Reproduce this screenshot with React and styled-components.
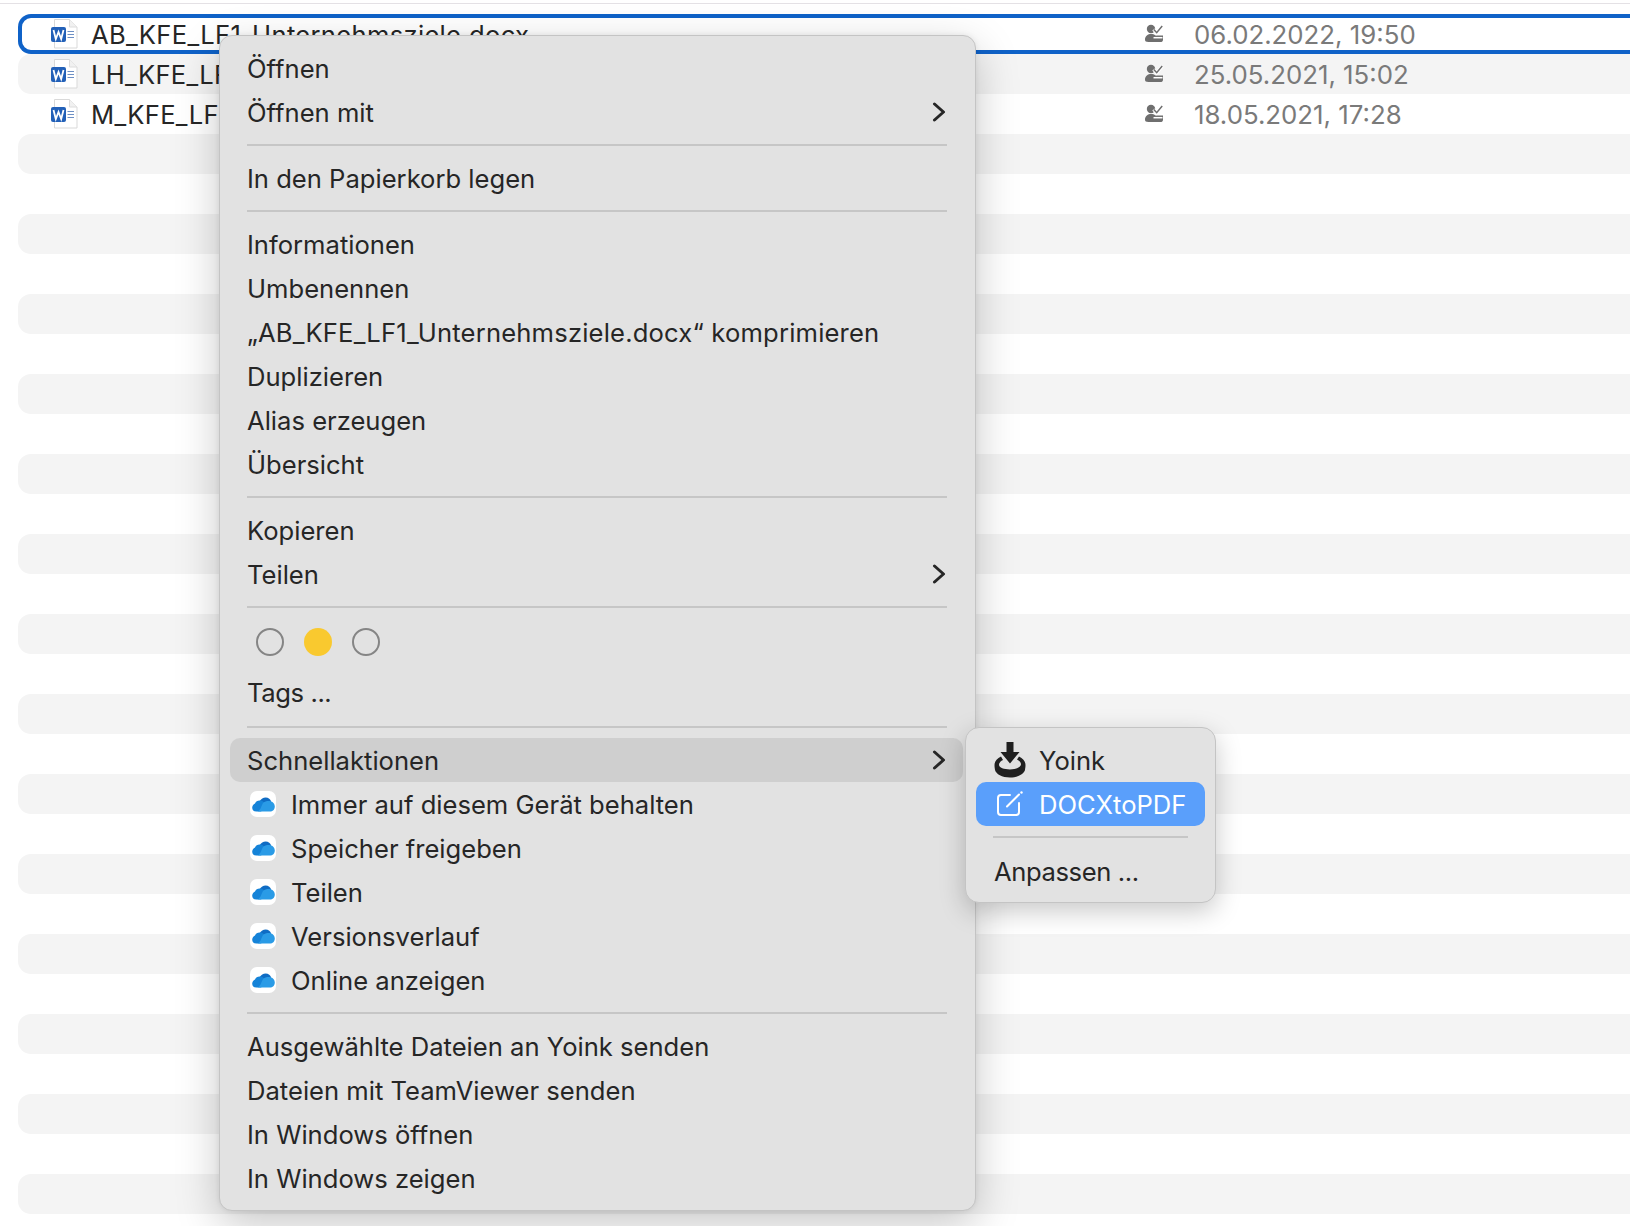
import React from "react";
import styled, { createGlobalStyle } from "styled-components";

const GlobalStyle = createGlobalStyle`
  html, body {
    margin: 0;
    padding: 0;
    height: 100%;
    background: #fff;
    overflow: hidden;
  }
  body {
    font-family: Inter, "Noto Sans", "Liberation Sans", sans-serif;
    color: #262626;
  }
`;

const Page = styled.div`
  position: relative;
  width: 1630px;
  height: 1226px;
  overflow: hidden;
  background: #fff;
`;

const TopLine = styled.div`
  height: 1px;
  margin-top: 3px;
  margin-bottom: 10px;
  background: #e4e1e5;
`;

const FileList = styled.div`
  display: flex;
  flex-direction: column;
  margin-left: 18px;
  margin-right: -30px;
`;

const Row = styled.div`
  box-sizing: border-box;
  height: 40px;
  display: flex;
  align-items: center;
  padding-left: 33px;
  border-radius: 13px 0 0 13px;
  background: ${(p) => (p.$odd ? "#f4f4f4" : "#fff")};
  ${(p) => p.$selected && "box-shadow: inset 0 0 0 4px #0f62c8;"}
`;

const FileName = styled.span`
  width: 1053px;
  margin: 1px 0 0 10px;
  font-size: 25.6px;
  white-space: nowrap;
  letter-spacing: 0.3px;
`;

const DateText = styled.span`
  margin: 1px 0 0 30px;
  font-size: 25.8px;
  color: #7a7a7a;
`;

const Menu = styled.div`
  position: absolute;
  box-sizing: border-box;
  left: 219px;
  top: 35px;
  width: 757px;
  height: 1176px;
  padding: 11px 12px 0 10px;
  background: #e2e2e2;
  border: 1px solid #c4c4c4;
  border-radius: 13px;
  box-shadow: 0 14px 44px rgba(0, 0, 0, 0.22), 0 0 6px rgba(0, 0, 0, 0.08);
`;

const Item = styled.div`
  box-sizing: border-box;
  height: 44px;
  display: flex;
  align-items: center;
  padding: 0 17px;
  border-radius: 10px;
  font-size: 25.6px;
  white-space: nowrap;
  letter-spacing: ${(p) => p.$spacing || 0};
  background: ${(p) => (p.$active ? "#cfcfcf" : "transparent")};
`;

/* text in the upper half of the menu sits a pixel higher than the lower half */
const UpperSection = styled.div`
  ${Item} {
    padding-bottom: 2px;
  }
`;

const Label = styled.span`
  flex: 1;
`;

const Separator = styled.div`
  height: 2px;
  margin: ${(p) => p.$top || "9px"} 16px ${(p) => p.$bottom || "11px"} 17px;
  background: #c6c6c6;
`;

const TagRow = styled.div`
  display: flex;
  gap: 20px;
  padding: 9px 0 15px 26px;
`;

const TagDot = styled.span`
  box-sizing: border-box;
  width: 28px;
  height: 28px;
  border-radius: 50%;
  border: ${(p) => (p.$color ? "none" : "2px solid #858585")};
  background: ${(p) => p.$color || "transparent"};
`;

const CloudBadge = styled.span`
  width: 26px;
  height: 26px;
  margin: 0 15px 0 3px;
  display: flex;
  align-items: center;
  justify-content: center;
  flex: none;
  background: #fff;
  border-radius: 7px;
`;

const SubMenu = styled.div`
  position: absolute;
  box-sizing: border-box;
  left: 965px;
  top: 727px;
  width: 251px;
  height: 176px;
  padding: 10px 10px 0;
  background: #e2e2e2;
  border: 1px solid #c4c4c4;
  border-radius: 14px;
  box-shadow: 0 8px 26px rgba(0, 0, 0, 0.22);
`;

const SubItem = styled.div`
  height: 44px;
  display: flex;
  align-items: center;
  padding: 0 18px;
  border-radius: 10px;
  font-size: 25.6px;
  white-space: nowrap;
  letter-spacing: ${(p) => p.$spacing || 0};
  color: ${(p) => (p.$active ? "#fff" : "#262626")};
  background: ${(p) => (p.$active ? "#5a9ffb" : "transparent")};
`;

const SubIcon = styled.span`
  width: 45px;
  display: flex;
  align-items: center;
  flex: none;
`;

const SubSeparator = styled.div`
  height: 2px;
  margin: 10px 17px 11px;
  background: #c6c6c6;
`;

const WordIcon = () => (
  <svg width="30" height="32" viewBox="0 0 30 32">
    <path d="M3.500 1.500h15l7.500 7.500v21h-22.500z" fill="#fff" stroke="#d9d9d9" strokeWidth="1" />
    <path d="M18.500 1.500v7.500h7.500" fill="#f1f1f1" stroke="#dcdcdc" strokeWidth="1" />
    <rect x="0" y="9" width="15" height="15" rx="2" fill="#2260b8" />
    <path d="M2.500 12l2.300 9 2.700-7 2.700 7 2.300-9" fill="none" stroke="#fff" strokeWidth="1.800" />
    <path d="M16.500 13.500h6.500M16.500 16.500h6.500M16.500 19.500h6.500" stroke="#6d8fc4" strokeWidth="1.200" />
  </svg>
);

const SharedIcon = () => (
  <svg width="20" height="20" viewBox="0 0 20 20">
    <circle cx="7" cy="5" r="4.200" fill="#6f6f6f" />
    <path d="M1 15.500c0-3.500 3-5.500 6-5.500 2 0 3 .4 4.500 1.500H19v4.200c0 1.600-1 2.300-2.500 2.300h-12C2 18 1 17.300 1 15.500z" fill="#6f6f6f" />
    <path d="M9.500 13.700h9" stroke="#fff" strokeWidth="1.500" />
    <path d="M9.500 5.500l3.200 3.500 5.800-7" fill="none" stroke="#fff" strokeWidth="3.200" />
    <path d="M9.800 5.500l2.900 3.200 5.500-6.700" fill="none" stroke="#6f6f6f" strokeWidth="1.500" />
  </svg>
);

const Chevron = () => (
  <svg width="14" height="20" viewBox="0 0 14 20">
    <path d="M2.500 2l9 8-9 8" fill="none" stroke="#262626" strokeWidth="3" strokeLinecap="round" strokeLinejoin="round" />
  </svg>
);

const OneDriveIcon = () => (
  <svg width="23" height="15" viewBox="0 0 23 15">
    <path d="M7.500 4.500C9 1.800 11.300.5 13.600.5c2.800 0 5 1.700 5.600 4.300l-6.200 5z" fill="#0f6cc4" />
    <path d="M3 6.500c.7-2 2.700-3 4.800-2.900 1.400 0 2.700.4 3.700 1.300L16 9l-7 5.500H4C1.700 14.500.2 12.900.2 10.800c0-1.900 1.100-3.700 2.800-4.300z" fill="#1583d8" />
    <path d="M11 6c2.300-1.900 5.200-2.400 7.700-1.700 2.500.7 4.100 2.700 4.100 5.100 0 2.900-2.100 5.100-5 5.100H5c3.200 0 4.300-5.500 6-8.500z" fill="#2a9be6" />
  </svg>
);

const YoinkIcon = () => (
  <svg width="32" height="36" viewBox="0 0 32 36">
    <path d="M12.500 0h7v10h6L16 21.500 6.500 10h6z" fill="#1f1f1f" />
    <path d="M7 14.500C3 16.500.5 19.300.5 23c0 2 .3 3.500.5 5 1 4 7 7.500 15 7.500s14-3.500 15-7.500c.2-1.500.5-3 .5-5 0-3.700-2.500-6.500-6.500-8.500l-2 3c2.500 1.200 4 3 4 4.800 0 2.800-5 5.200-11 5.200S5 25.600 5 22.800c0-1.800 1.500-3.600 4-4.800z" fill="#1f1f1f" />
  </svg>
);

const EditIcon = () => (
  <svg width="30" height="26" viewBox="-2 0 30 26">
    <path d="M14 4H5a3 3 0 0 0-3 3v14a3 3 0 0 0 3 3h15a3 3 0 0 0 3-3v-9" fill="none" stroke="#fff" strokeWidth="2" strokeLinecap="round" />
    <path d="M11 15.500L23 3.500" stroke="#fff" strokeWidth="2" strokeLinecap="round" />
    <circle cx="25.500" cy="1.500" r="1.200" fill="#fff" />
  </svg>
);

const files = [
  { name: "AB_KFE_LF1_Unternehmsziele.docx", date: "06.02.2022, 19:50" },
  { name: "LH_KFE_LF1_Unternehmensziele.docx", date: "25.05.2021, 15:02" },
  { name: "M_KFE_LF1_Unternehmensziele.docx", date: "18.05.2021, 17:28" },
];

const stripes = Array.from({ length: 31 - files.length });

const App = () => {
  return (
    <Page>
      <GlobalStyle />
      <TopLine />
      <FileList>
        {files.map((f, i) => (
          <Row key={f.name} $selected={i === 0} $odd={i % 2 === 1}>
            <WordIcon />
            <FileName>{f.name}</FileName>
            <SharedIcon />
            <DateText>{f.date}</DateText>
          </Row>
        ))}
        {stripes.map((_, i) => (
          <Row key={i} $odd={(i + files.length) % 2 === 1} />
        ))}
      </FileList>

      <Menu>
        <UpperSection>
          <Item>Öffnen</Item>
          <Item>
            <Label>Öffnen mit</Label>
            <Chevron />
          </Item>
          <Separator />
          <Item>In den Papierkorb legen</Item>
          <Separator />
          <Item>Informationen</Item>
          <Item>Umbenennen</Item>
          <Item $spacing="0.18px">„AB_KFE_LF1_Unternehmsziele.docx“ komprimieren</Item>
          <Item>Duplizieren</Item>
          <Item>Alias erzeugen</Item>
          <Item>Übersicht</Item>
          <Separator />
          <Item>Kopieren</Item>
          <Item>
            <Label>Teilen</Label>
            <Chevron />
          </Item>
          <Separator />
          <TagRow>
            <TagDot />
            <TagDot $color="#f9c92f" />
            <TagDot />
          </TagRow>
          <Item $spacing="-0.4px">Tags ...</Item>
        </UpperSection>
        <Separator $top="11px" $bottom="10px" />
        <Item $active>
          <Label>Schnellaktionen</Label>
          <Chevron />
        </Item>
        {["Immer auf diesem Gerät behalten", "Speicher freigeben", "Teilen", "Versionsverlauf", "Online anzeigen"].map((t) => (
          <Item key={t}>
            <CloudBadge>
              <OneDriveIcon />
            </CloudBadge>
            {t}
          </Item>
        ))}
        <Separator $top="10px" $bottom="10px" />
        <Item>Ausgewählte Dateien an Yoink senden</Item>
        <Item>Dateien mit TeamViewer senden</Item>
        <Item>In Windows öffnen</Item>
        <Item>In Windows zeigen</Item>
      </Menu>

      <SubMenu>
        <SubItem>
          <SubIcon>
            <YoinkIcon />
          </SubIcon>
          Yoink
        </SubItem>
        <SubItem $active>
          <SubIcon>
            <EditIcon />
          </SubIcon>
          DOCXtoPDF
        </SubItem>
        <SubSeparator />
        <SubItem $spacing="-0.4px">Anpassen ...</SubItem>
      </SubMenu>
    </Page>
  );
};

export default App;
